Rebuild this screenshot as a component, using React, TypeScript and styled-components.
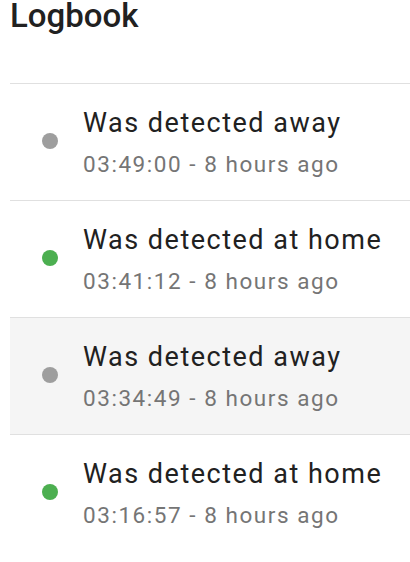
import React from "react";
import styled, { createGlobalStyle } from "styled-components";

const GlobalStyle = createGlobalStyle`
  html, body {
    margin: 0;
    padding: 0;
    background: #ffffff;
    font-family: Roboto, "Noto Sans", sans-serif;
    -webkit-font-smoothing: antialiased;
  }
`;

type EntryState = "home" | "away";

interface LogEntry {
  message: string;
  time: string;
  ago: string;
  state: EntryState;
}

const entries: LogEntry[] = [
  { message: "Was detected away", time: "03:49:00", ago: "8 hours ago", state: "away" },
  { message: "Was detected at home", time: "03:41:12", ago: "8 hours ago", state: "home" },
  { message: "Was detected away", time: "03:34:49", ago: "8 hours ago", state: "away" },
  { message: "Was detected at home", time: "03:16:57", ago: "8 hours ago", state: "home" },
];

const Card = styled.div`
  padding-left: 10px;
`;

const Title = styled.h1`
  margin: 0 0 52px;
  font-size: 33px;
  line-height: 31px;
  font-weight: 500;
  color: #212121;
`;

const List = styled.div`
  display: flex;
  flex-direction: column;
`;

const Row = styled.div<{ $highlighted?: boolean }>`
  display: flex;
  align-items: center;
  gap: 25px;
  padding: 21px 0 21px 32px;
  border-top: 1px solid #e0e0e0;
  background: ${(p) => (p.$highlighted ? "#f5f5f5" : "transparent")};
`;

const Dot = styled.span<{ $state: EntryState }>`
  flex: none;
  width: 16px;
  height: 16px;
  margin-top: -2px;
  border-radius: 50%;
  background: ${(p) => (p.$state === "home" ? "#4caf50" : "#9e9e9e")};
`;

const Info = styled.div`
  display: flex;
  flex-direction: column;
  gap: 8px;
`;

const Message = styled.div`
  font-size: 27px;
  line-height: 36px;
  color: #212121;
  letter-spacing: 1.5px;
  white-space: nowrap;
`;

const Meta = styled.div`
  font-size: 22.5px;
  line-height: 30px;
  color: #757575;
  letter-spacing: 1.55px;
  white-space: nowrap;
`;

export default function App() {
  return (
    <>
      <GlobalStyle />
      <Card>
        <Title>Logbook</Title>
        <List>
          {entries.map((entry, i) => (
            <Row key={entry.time} $highlighted={i === 2}>
              <Dot $state={entry.state} />
              <Info>
                <Message>{entry.message}</Message>
                <Meta>
                  {entry.time} - {entry.ago}
                </Meta>
              </Info>
            </Row>
          ))}
        </List>
      </Card>
    </>
  );
}
